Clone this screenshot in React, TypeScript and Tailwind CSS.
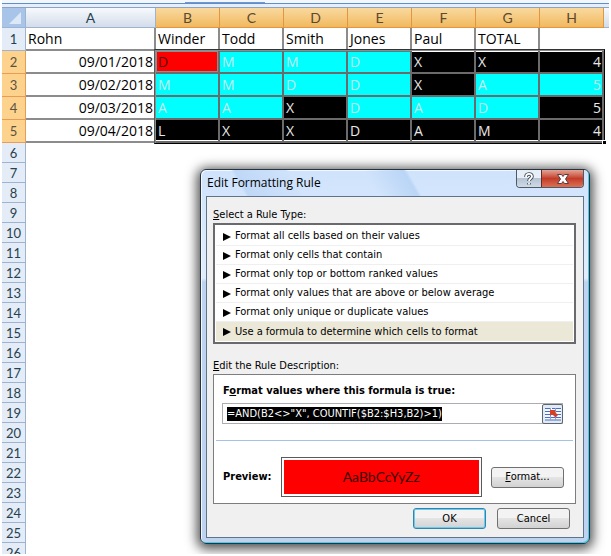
import clsx from 'clsx'

type CellStyle = 'dark' | 'cyan' | 'red'

type Cell = {
    value: string
    style: CellStyle
}

const columns = ['A', 'B', 'C', 'D', 'E', 'F', 'G', 'H']

const names = ['Rohn', 'Winder', 'Todd', 'Smith', 'Jones', 'Paul', 'TOTAL', '']

// k = black, c = cyan, r = red
const schedule = [
    { date: '09/01/2018', values: 'DMMDXX4', fills: 'rccckkk' },
    { date: '09/02/2018', values: 'MMDDXA5', fills: 'cccckcc' },
    { date: '09/03/2018', values: 'AAXDAD5', fills: 'cckccck' },
    { date: '09/04/2018', values: 'LXXDAM4', fills: 'kkkkkkk' },
]

const emptyRows = Array.from({ length: 21 }, (_, i) => i + 6)

const ruleTypes = [
    'Format all cells based on their values',
    'Format only cells that contain',
    'Format only top or bottom ranked values',
    'Format only values that are above or below average',
    'Format only unique or duplicate values',
    'Use a formula to determine which cells to format',
]

const fillNames: Record<string, CellStyle> = { k: 'dark', c: 'cyan', r: 'red' }

const cellStyles: Record<CellStyle, string> = {
    dark: 'bg-black text-[#e8e8e8]',
    cyan: 'bg-[#00ffff] text-[#c4ecec]',
    red: 'bg-[#ff0000] text-[#5c0000]',
}

function toCells(values: string, fills: string): Cell[] {
    return values.split('').map((value, i) => ({ value, style: fillNames[fills[i]] }))
}

function RowHeading({ row, active = false }: { row: number, active?: boolean }) {
    return (
        <th
            scope="row"
            className={clsx(
                'border-r border-b p-0 text-center font-[Lato,sans-serif] text-[13px] leading-[18px] font-normal',
                active ? 'border-[#e89c55] bg-[#fdd28d] text-[#5a5340]' : 'border-[#9eb3cf] bg-[#e4ecf7] text-[#27414e]'
            )}
        >
            {row}
        </th>
    )
}

function Sheet() {
    return (
        <table className="w-full table-fixed border-separate border-spacing-0 font-['Open_Sans',sans-serif] text-sm leading-5">
            <colgroup>
                <col className="w-6" />
                <col className="w-[130px]" />
                {names.slice(1).map((_, i) => <col key={i} className="w-16" />)}
                <col />
            </colgroup>
            <thead>
                <tr className="h-5">
                    <th className="border-r border-b border-[#9eb3cf] bg-[#a9c4e9] p-0" aria-label="Select all">
                        <svg viewBox="0 0 23 19" className="block h-[19px] w-full" aria-hidden="true">
                            <path d="M19 4v12H7z" fill="#dce8f7" />
                        </svg>
                    </th>
                    {columns.map((column, i) => (
                        <th
                            key={column}
                            scope="col"
                            className={clsx(
                                'border-r border-b bg-linear-to-b p-0 font-[Lato,sans-serif] text-sm leading-[19px] font-normal',
                                i === 0
                                    ? 'border-[#9eb3cf] from-[#f7fafd] to-[#d3dcea] text-[#27414e]'
                                    : 'border-[#e3953f] from-[#f9d99f] to-[#f1b95d] text-[#5a4a30]'
                            )}
                        >
                            {column}
                        </th>
                    ))}
                    <th className="border-b border-[#9eb3cf] bg-linear-to-b from-[#f7fafd] to-[#d3dcea] p-0" />
                </tr>
            </thead>
            <tbody>
                <tr className="h-[23px]">
                    <RowHeading row={1} />
                    {names.map((name, i) => (
                        <td
                            key={i}
                            className={clsx(
                                'border-b-2 border-[#8c8c8c] py-0 pr-0 pl-[2px]',
                                i > 0 && i < 7 && 'border-r-2',
                                i === 0 && 'border-r-2'
                            )}
                        >
                            {name}
                        </td>
                    ))}
                    <td />
                </tr>
                {schedule.map((day, r) => (
                    <tr key={day.date} className="h-[23px]">
                        <RowHeading row={r + 2} active />
                        <td className="border-r-2 border-b-2 border-[#8c8c8c] py-0 pr-px pl-0 text-right">{day.date}</td>
                        {toCells(day.values, day.fills).map((cell, c) => (
                            <td
                                key={c}
                                className={clsx(
                                    'border-r-2 border-b-2 border-[#6b6b6b] py-0 pl-[2px]',
                                    cellStyles[cell.style],
                                    c === 6 ? 'pr-px text-right' : 'pr-0',
                                    cell.style === 'red' && 'shadow-[inset_0_0_0_1px_#8a8f8f]',
                                    r === 0 && cell.style === 'dark' && 'shadow-[inset_0_1px_#ffffff]',
                                    r === 0 && cell.style === 'cyan' && 'shadow-[inset_0_1px_#3f8a8a]',
                                    r === 3 && 'shadow-[inset_0_-1px_#ffffff]'
                                )}
                            >
                                {cell.value}
                            </td>
                        ))}
                        <td />
                    </tr>
                ))}
                {emptyRows.map((row) => (
                    <tr key={row} className="h-5">
                        <RowHeading row={row} />
                        <td colSpan={9} />
                    </tr>
                ))}
            </tbody>
        </table>
    )
}

function RangePickerIcon() {
    return (
        <svg viewBox="0 0 16 14" className="h-[14px] w-4" aria-hidden="true">
            <rect x="0" y="1" width="16" height="12" fill="#f4f8ff" />
            <path d="M0 1.5h5M7 1.5h9M0 4.5h16M0 7.5h16M0 10.5h16M0 13h16" stroke="#4a6fc0" />
            <path d="M5.5 1v12M10.5 1v12" stroke="#8aa5dc" />
            <path d="M5 3h6L9.500 4.500 13 8l-2.500 2.500L7 7 5 9z" fill="#d8401f" />
        </svg>
    )
}

const buttonStyle = 'h-[21px] w-[73px] rounded-[3px] border bg-linear-to-b from-[#f3f3f3] from-45% via-[#e4e4e4] via-50% to-[#d2d2d2] leading-[18px]'

function FormattingDialog() {
    return (
        <section
            role="dialog"
            aria-labelledby="dialog-title"
            className="absolute top-[169px] left-[200px] w-[390px] rounded-[6px] border border-[#263442] bg-linear-to-b from-[#cfe3fc] from-0% via-[#e1edfc] via-29% to-[#bdd3ef] to-30% px-[5px] pb-[5px] font-['DejaVu_Sans_Condensed',sans-serif] text-[11px] text-black shadow-[inset_-1px_-1px_#42cdec,inset_1px_1px_#f2f8ff,0_2px_12px_3px_rgba(0,0,0,0.7)]"
        >
            <header className="flex h-[26px] justify-between bg-[linear-gradient(60deg,transparent_10%,#bfd8f7_11%,#cfe2fb_24%,transparent_25%,transparent_44%,#bad5f6_54%,transparent_55%)]">
                <h1 id="dialog-title" className="pl-px font-['Open_Sans',sans-serif] text-xs leading-[26px]">Edit Formatting Rule</h1>
                <div className="flex h-[18px] overflow-hidden rounded-b-[4px] border border-t-0 border-[#4d5967]">
                    <button type="button" aria-label="Help" className="flex w-6 items-center justify-center bg-linear-to-b from-[#e6eef7] from-45% via-[#b5c3d2] via-50% to-[#cfdae6]">
                        <svg viewBox="0 0 12 14" className="h-[14px] w-3" fill="none" aria-hidden="true">
                            <path d="M3 5c0-4 6-4 6-.5C9 6.500 6 6.500 6 9M6 11v1.500" stroke="#434b58" strokeWidth="3.600" />
                            <path d="M3 5c0-4 6-4 6-.5C9 6.500 6 6.500 6 9M6 11v1.500" stroke="#ffffff" strokeWidth="1.800" />
                        </svg>
                    </button>
                    <button type="button" aria-label="Close" className="flex w-[42px] items-center justify-center border-l border-[#6b2a24] bg-linear-to-b from-[#e3a396] from-0% via-[#c23c28] via-50% to-[#dc6f56]">
                        <svg viewBox="0 0 14 12" className="h-3 w-[14px]" aria-hidden="true">
                            <path d="M1.500 1.500h4L7 3.500l1.500-2h4L9.500 6l3 4.500h-4L7 8.500l-1.500 2h-4l3-4.500z" fill="#ffffff" stroke="#5c3b3f" />
                        </svg>
                    </button>
                </div>
            </header>

            <form className="border border-[#5f7389] bg-[#f0f0f0] pr-[7px] pb-2 pl-[6px]" onSubmit={(e) => e.preventDefault()}>
                <h2 id="rule-types" className="pt-[10px] leading-4"><u>S</u>elect a Rule Type:</h2>
                <ul aria-labelledby="rule-types" className="border-2 border-[#6a6a6e] bg-white px-px pt-[2px] pb-px">
                    {ruleTypes.map((rule, i) => (
                        <li key={rule} className={clsx('h-[19px]', i < 5 ? 'border-b border-[#efefef]' : 'bg-[#ebe8d8]')}>
                            <button type="button" className="flex h-full w-full items-center gap-1 pt-px pl-[7px] text-left">
                                <svg viewBox="0 0 8 8" className="size-2" aria-hidden="true">
                                    <path d="M0 0l8 4-8 4z" />
                                </svg>
                                {rule}
                            </button>
                        </li>
                    ))}
                </ul>

                <h2 className="mt-[14px] leading-4"><u>E</u>dit the Rule Description:</h2>
                <div className="border border-[#7d7d80] bg-white">
                    <div className="mx-[2px] border-b border-[#a3c3e6] px-[6px] pt-2 pb-4">
                        <label htmlFor="formula" className="block pl-px leading-4 font-bold">F<u>o</u>rmat values where this formula is true:</label>
                        <div className="mt-1 mr-1 flex h-[21px] items-center justify-between border border-[#abadb3] pl-1">
                            <input
                                id="formula"
                                defaultValue={'=AND(B2<>"X", COUNTIF($B2:$H3,B2)>1)'}
                                className="field-sizing-content h-[14px] bg-black leading-[14px] text-white outline-none"
                            />
                            <button type="button" aria-label="Select range" className="-mr-px flex h-5 w-[21px] shrink-0 items-center justify-center rounded-[2px] border border-[#5b6670] bg-[#e3eaf6]">
                                <RangePickerIcon />
                            </button>
                        </div>
                    </div>
                    <div className="flex items-center justify-between pt-4 pr-[11px] pb-[6px] pl-[9px]">
                        <strong>Preview:</strong>
                        <div className="w-[201px] border border-[#5a5a5a] bg-white p-[2px]">
                            <div className="bg-[#ff0000] text-center font-[Lato,sans-serif] text-sm leading-[34px] text-[#3a0000]">AaBbCcYyZz</div>
                        </div>
                        <button type="button" className={clsx(buttonStyle, 'border-[#707070]')}><u>F</u>ormat...</button>
                    </div>
                </div>

                <footer className="mt-1 flex justify-end gap-[11px] pr-[6px]">
                    <button type="submit" className={clsx(buttonStyle, 'border-[#2c86b0] shadow-[inset_0_0_0_1px_#6fc9ea]')}>OK</button>
                    <button type="button" className={clsx(buttonStyle, 'border-[#707070]')}>Cancel</button>
                </footer>
            </form>
        </section>
    )
}

export default function App(): React.JSX.Element {
    return (
        <div className="h-screen bg-white pr-[2px] pb-[2px]">
            <main className="relative h-full overflow-hidden pl-[2px]">
                {/* Bottom edge of the formula bar */}
                <div className="h-[3px] bg-[#f3f7fc] pl-[183px]">
                    <div className="h-full w-20 border-b border-[#6f97cd]" />
                </div>
                <div className="h-[5px] border-t border-b border-t-[#5f8fcb] border-b-[#8ba3c4] bg-[#e6eff9]" />

                <div className="relative">
                    <Sheet />
                    {/* Selected range B2:H5 */}
                    <div className="pointer-events-none absolute top-[41px] left-[152px] h-[95px] w-[451px] border-t border-r border-b border-l border-t-[#333333] border-r-black border-b-black border-l-[#5a5a5a]">
                        <span className="absolute -right-[3px] -bottom-[2px] size-[5px] border border-white bg-black" />
                    </div>
                </div>
                <FormattingDialog />
            </main>
        </div>
    )
}
